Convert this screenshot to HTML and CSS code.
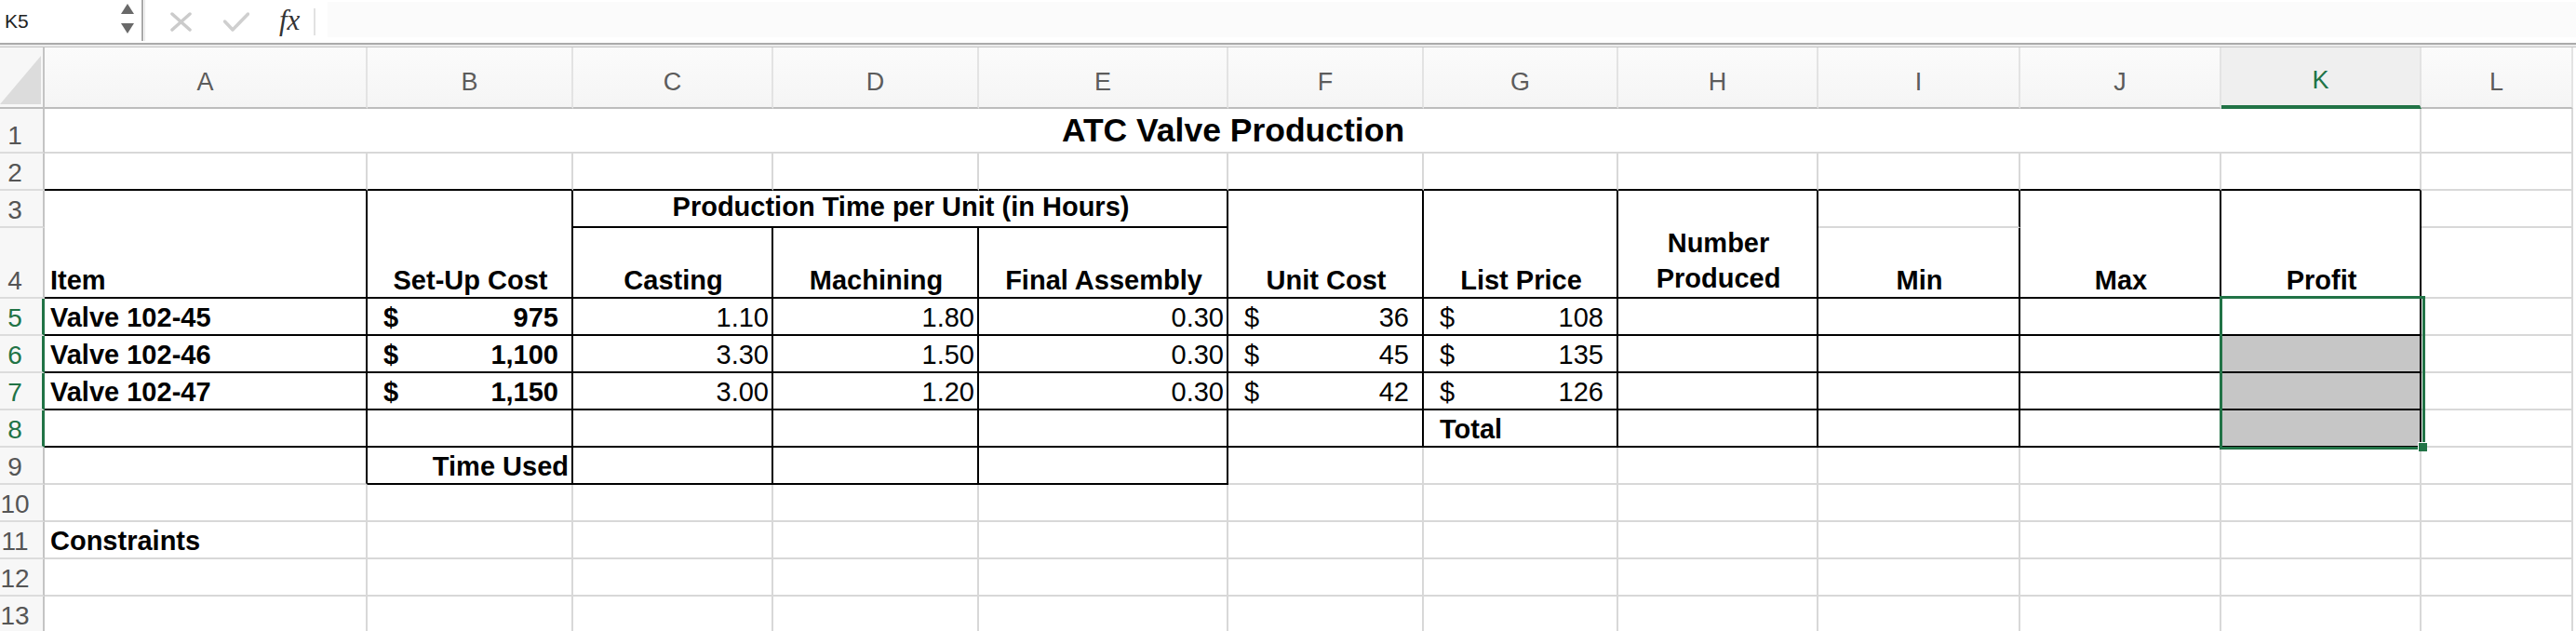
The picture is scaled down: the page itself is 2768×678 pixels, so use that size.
FILE: index.html
```html
<!DOCTYPE html>
<html>
<head>
<meta charset="utf-8">
<title>ATC Valve Production</title>
<link rel="stylesheet" href="styles.css">
</head>
<body>
<div class="fbar">
  <div class="namebox">
    <span class="ref">K5</span>
    <svg class="spin" width="14" height="40" viewBox="0 0 14 40"><polygon points="7,4 14,15 0,15"/><polygon points="0,25 14,25 7,36"/></svg>
  </div>
  <div class="vsep"></div>
  <div class="fbtns">
    <svg class="ico-x" width="23" height="21" viewBox="0 0 23 21"><path d="M2 2 L21 19 M21 2 L2 19"/></svg>
    <svg class="ico-ok" width="28" height="21" viewBox="0 0 28 21"><polyline points="1.5,10 10,19 26.5,2"/></svg>
    <span class="fx">fx</span>
    <div class="fsep"></div>
  </div>
  <div class="finput"></div>
</div>
<div class="sep"></div>
<div class="wrap">
  <div class="sheet">
    <div class="corner"><svg width="46" height="64" viewBox="0 0 46 64"><polygon points="0,61 44,9 44,61"/></svg></div>
    <div class="ch">A</div><div class="ch">B</div><div class="ch">C</div><div class="ch">D</div><div class="ch">E</div><div class="ch">F</div><div class="ch">G</div><div class="ch">H</div><div class="ch">I</div><div class="ch">J</div><div class="ch on">K</div><div class="ch">L</div>

    <div class="rh">1</div>
    <div class="c title">ATC Valve Production</div>
    <div class="c"></div>

    <div class="rh">2</div>
    <div class="c bb"></div><div class="c bb"></div><div class="c bb"></div><div class="c bb"></div><div class="c bb"></div><div class="c bb"></div><div class="c bb"></div><div class="c bb"></div><div class="c bb"></div><div class="c bb"></div><div class="c bb"></div>
    <div class="c"></div>

    <div class="rh">3</div>
    <div class="c br bb b r2">Item</div>
    <div class="c br bb b r2 ctr">Set-Up Cost</div>
    <div class="c br bb b c3 ctr ptu">Production Time per Unit (in Hours)</div>
    <div class="c br bb b r2 ctr">Unit Cost</div>
    <div class="c br bb b r2 ctr">List Price</div>
    <div class="c br bb b r2 ctr np"><span>Number<br>Produced</span></div>
    <div class="c br"></div>
    <div class="c br bb b r2 ctr">Max</div>
    <div class="c br bb b r2 ctr">Profit</div>
    <div class="c"></div>

    <div class="rh">4</div>
    <div class="c br bb b ctr">Casting</div>
    <div class="c br bb b ctr">Machining</div>
    <div class="c br bb b ctr">Final Assembly</div>
    <div class="c br bb b ctr">Min</div>
    <div class="c"></div>

    <div class="rh on">5</div>
    <div class="c br bb b">Valve 102-45</div>
    <div class="c br bb b acct"><span>$</span><span>975</span></div>
    <div class="c br bb num">1.10</div>
    <div class="c br bb num">1.80</div>
    <div class="c br bb num">0.30</div>
    <div class="c br bb acct"><span>$</span><span>36</span></div>
    <div class="c br bb acct"><span>$</span><span>108</span></div>
    <div class="c br bb"></div><div class="c br bb"></div><div class="c br bb"></div><div class="c br bb"></div>
    <div class="c"></div>

    <div class="rh on">6</div>
    <div class="c br bb b">Valve 102-46</div>
    <div class="c br bb b acct"><span>$</span><span>1,100</span></div>
    <div class="c br bb num">3.30</div>
    <div class="c br bb num">1.50</div>
    <div class="c br bb num">0.30</div>
    <div class="c br bb acct"><span>$</span><span>45</span></div>
    <div class="c br bb acct"><span>$</span><span>135</span></div>
    <div class="c br bb"></div><div class="c br bb"></div><div class="c br bb"></div><div class="c br bb g"></div>
    <div class="c"></div>

    <div class="rh on">7</div>
    <div class="c br bb b">Valve 102-47</div>
    <div class="c br bb b acct"><span>$</span><span>1,150</span></div>
    <div class="c br bb num">3.00</div>
    <div class="c br bb num">1.20</div>
    <div class="c br bb num">0.30</div>
    <div class="c br bb acct"><span>$</span><span>42</span></div>
    <div class="c br bb acct"><span>$</span><span>126</span></div>
    <div class="c br bb"></div><div class="c br bb"></div><div class="c br bb"></div><div class="c br bb g"></div>
    <div class="c"></div>

    <div class="rh on">8</div>
    <div class="c br bb"></div><div class="c br bb"></div><div class="c br bb"></div><div class="c br bb"></div><div class="c br bb"></div><div class="c br bb"></div>
    <div class="c br bb b ind">Total</div>
    <div class="c br bb"></div><div class="c br bb"></div><div class="c br bb"></div><div class="c br bb g"></div>
    <div class="c"></div>

    <div class="rh">9</div>
    <div class="c br"></div>
    <div class="c br bb b rt">Time Used</div>
    <div class="c br bb"></div><div class="c br bb"></div><div class="c br bb"></div>
    <div class="c"></div><div class="c"></div><div class="c"></div><div class="c"></div><div class="c"></div><div class="c"></div><div class="c"></div>

    <div class="rh">10</div>
    <div class="c"></div><div class="c"></div><div class="c"></div><div class="c"></div><div class="c"></div><div class="c"></div><div class="c"></div><div class="c"></div><div class="c"></div><div class="c"></div><div class="c"></div><div class="c"></div>

    <div class="rh">11</div>
    <div class="c b">Constraints</div>
    <div class="c"></div><div class="c"></div><div class="c"></div><div class="c"></div><div class="c"></div><div class="c"></div><div class="c"></div><div class="c"></div><div class="c"></div><div class="c"></div><div class="c"></div>

    <div class="rh">12</div>
    <div class="c"></div><div class="c"></div><div class="c"></div><div class="c"></div><div class="c"></div><div class="c"></div><div class="c"></div><div class="c"></div><div class="c"></div><div class="c"></div><div class="c"></div><div class="c"></div>

    <div class="rh">13</div>
    <div class="c"></div><div class="c"></div><div class="c"></div><div class="c"></div><div class="c"></div><div class="c"></div><div class="c"></div><div class="c"></div><div class="c"></div><div class="c"></div><div class="c"></div><div class="c"></div>
  </div>
  <div class="selbox"><div class="handle"></div></div>
</div>
</body>
</html>
```

FILE: styles.css
```css
* { box-sizing: border-box; margin: 0; padding: 0; }
html, body { background: #fff; overflow: hidden; }
body {
  width: 2768px;
  height: 678px;
  font-family: "Liberation Sans", Arial, sans-serif;
  color: #000;
}

/* formula bar */
.fbar { display: flex; height: 46px; background: #fff; }
.namebox {
  width: 152px;
  display: flex;
  align-items: center;
  justify-content: space-between;
  padding: 0 8px 0 5px;
}
.ref { font-size: 21px; color: #222; }
.spin { align-self: flex-start; fill: #696969; }
.vsep {
  width: 4px;
  height: 44px;
  border-left: 2px solid #a9a9a9;
  border-right: 1px solid #e4e4e4;
}
.fbtns {
  display: flex;
  align-items: center;
  padding-left: 27px;
}
.ico-x { fill: none; stroke: #cbcbcb; stroke-width: 3.5; stroke-linecap: round; }
.ico-ok { fill: none; stroke: #cfcfcf; stroke-width: 3.5; stroke-linecap: round; stroke-linejoin: round; margin-left: 34px; }
.fx {
  margin-left: 32px;
  font-family: "Liberation Serif", "DejaVu Serif", serif;
  font-style: italic;
  font-size: 31px;
  color: #333;
  line-height: 1;
  padding-bottom: 3px;
}
.fsep { width: 2px; height: 29px; background: #e2e2e2; margin-left: 15px; }
.finput { flex: 1; margin: 2px 0 6px 13px; background: #fbfbfb; }

.sep {
  height: 5px;
  border-top: 2px solid #ababab;
  background: #ececec;
  border-bottom: 1px solid #c4c4c4;
}

/* sheet */
.wrap { position: relative; }
.sheet {
  display: grid;
  grid-template-columns: 48px 347px 221px 215px 221px 268px 210px 209px 215px 217px 216px 215px 163px;
  grid-template-rows: 66px 48px 40px 40px 76px repeat(9, 40px);
}
.corner {
  background: #f7f7f7;
  border-right: 2px solid #c4c4c4;
  border-bottom: 2px solid #bdbdbd;
}
.corner svg { display: block; fill: #dcdcdc; }
.ch {
  display: flex;
  align-items: center;
  justify-content: center;
  padding-top: 10px;
  font-size: 27px;
  color: #5c5c5c;
  background: linear-gradient(#fbfbfb, #f5f5f5);
  border-right: 2px solid #e3e3e3;
  border-bottom: 2px solid #bdbdbd;
}
.ch.on {
  background: #efefef;
  color: #217346;
  border-bottom: 4px solid #217346;
  padding-top: 8px;
}
.rh {
  display: flex;
  align-items: flex-end;
  justify-content: center;
  padding: 0 14px 1px 0;
  font-size: 28px;
  color: #555;
  background: #f7f7f7;
  border-right: 2px solid #c4c4c4;
  border-bottom: 2px solid #dcdcdc;
}
.rh.on { color: #217346; border-right: 3px solid #217346; padding-right: 13px; }

.c {
  display: flex;
  align-items: flex-end;
  padding: 0 4px 1px 6px;
  font-size: 29px;
  white-space: nowrap;
  border-right: 2px solid #d8d8d8;
  border-bottom: 2px solid #d8d8d8;
}
.br { border-right-color: #000; }
.bb { border-bottom-color: #000; }
.b { font-weight: bold; }
.ctr { justify-content: center; }
.rt { justify-content: flex-end; padding-right: 3px; }
.num { justify-content: flex-end; padding-right: 3px; }
.acct { justify-content: space-between; padding: 0 14px 1px 17px; }
.ind { padding-left: 17px; }
.g { background: #c6c6c6; }
.r2 { grid-row: span 2; }
.c3 { grid-column: span 3; }
.ptu { padding-bottom: 4px; }
.np span { display: block; text-align: center; line-height: 38px; }
.title {
  grid-column: span 11;
  justify-content: center;
  font-size: 35.5px;
  font-weight: bold;
  padding-bottom: 2px;
}

/* selection */
.selbox {
  position: absolute;
  left: 2385px;
  top: 267px;
  width: 221px;
  height: 165px;
  border: 3px solid #217346;
}
.handle {
  position: absolute;
  right: -5px;
  bottom: -5px;
  width: 10px;
  height: 10px;
  background: #217346;
  border-left: 1px solid #fff;
  border-top: 1px solid #fff;
}
```
